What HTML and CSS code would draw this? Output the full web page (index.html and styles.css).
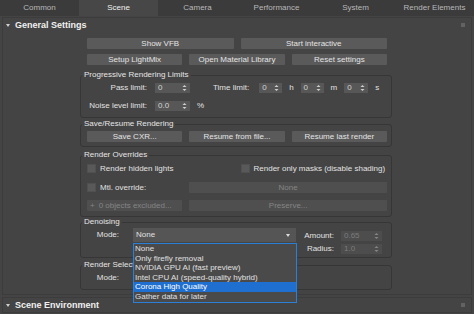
FILE: index.html
```html
<!DOCTYPE html>
<html lang="en">
<head>
    <meta charset="UTF-8">
    <title>Render Setup - Scene</title>
    <link rel="stylesheet" href="styles.css">
</head>
<body>

    <!-- Tab bar -->
    <div class="tabs">
        <div class="tab">Common</div>
        <div class="tab active">Scene</div>
        <div class="tab">Camera</div>
        <div class="tab">Performance</div>
        <div class="tab">System</div>
        <div class="tab">Render Elements</div>
    </div>

    <!-- General Settings rollout -->
    <div class="rollout">
        <div class="rollout-head"><span class="arrow"></span>General Settings<span class="pin"></span></div>
        <div class="rollout-body">

            <div class="btn-row two">
                <button class="btn">Show VFB</button>
                <button class="btn">Start interactive</button>
            </div>
            <div class="btn-row three">
                <button class="btn">Setup LightMix</button>
                <button class="btn">Open Material Library</button>
                <button class="btn">Reset settings</button>
            </div>

            <fieldset class="group g-limits">
                <legend>Progressive Rendering Limits</legend>
                <div class="row">
                    <span class="lbl">Pass limit:</span>
                    <span class="spin w35">0<svg viewBox="0 0 5 8"><polygon points="0.5,3 2.5,1 4.5,3"/><polygon points="0.5,5 2.5,7 4.5,5"/></svg></span>
                    <span class="lbl-time">Time limit:</span>
                    <span class="spin w23">0<svg viewBox="0 0 5 8"><polygon points="0.5,3 2.5,1 4.5,3"/><polygon points="0.5,5 2.5,7 4.5,5"/></svg></span>
                    <span class="unit">h</span>
                    <span class="spin w23">0<svg viewBox="0 0 5 8"><polygon points="0.5,3 2.5,1 4.5,3"/><polygon points="0.5,5 2.5,7 4.5,5"/></svg></span>
                    <span class="unit">m</span>
                    <span class="spin w24">0<svg viewBox="0 0 5 8"><polygon points="0.5,3 2.5,1 4.5,3"/><polygon points="0.5,5 2.5,7 4.5,5"/></svg></span>
                    <span class="unit">s</span>
                </div>
                <div class="row">
                    <span class="lbl">Noise level limit:</span>
                    <span class="spin w35">0.0<svg viewBox="0 0 5 8"><polygon points="0.5,3 2.5,1 4.5,3"/><polygon points="0.5,5 2.5,7 4.5,5"/></svg></span>
                    <span class="unit">%</span>
                </div>
            </fieldset>

            <fieldset class="group g-save">
                <legend>Save/Resume Rendering</legend>
                <div class="btn-row three flat">
                    <button class="btn">Save CXR...</button>
                    <button class="btn">Resume from file...</button>
                    <button class="btn">Resume last render</button>
                </div>
            </fieldset>

            <fieldset class="group g-over">
                <legend>Render Overrides</legend>
                <div class="grid2">
                    <label class="check"><span class="box"></span>Render hidden lights</label>
                    <label class="check"><span class="box"></span>Render only masks (disable shading)</label>
                </div>
                <div class="grid3">
                    <label class="check"><span class="box"></span>Mtl. override:</label>
                    <button class="btn off span2">None</button>
                </div>
                <div class="grid3">
                    <button class="btn off left"><span class="plus">+</span>0 objects excluded...</button>
                    <button class="btn off span2">Preserve...</button>
                </div>
            </fieldset>

            <fieldset class="group g-denoise">
                <legend>Denoising</legend>
                <div class="den">
                    <span class="mode-lbl">Mode:</span>
                    <div class="select">
                        None<span class="caret"></span>
                        <!-- opened dropdown list -->
                        <div class="list">
                            <div>None</div>
                            <div>Only firefly removal</div>
                            <div>NVIDIA GPU AI (fast preview)</div>
                            <div>Intel CPU AI (speed-quality hybrid)</div>
                            <div class="sel">Corona High Quality</div>
                            <div>Gather data for later</div>
                        </div>
                    </div>
                    <div class="den-right">
                        <div class="row">
                            <span class="lbl-small">Amount:</span>
                            <span class="spin off w41">0.65<svg viewBox="0 0 5 8"><polygon points="0.5,3 2.5,1 4.5,3"/><polygon points="0.5,5 2.5,7 4.5,5"/></svg></span>
                        </div>
                        <div class="row">
                            <span class="lbl-small">Radius:</span>
                            <span class="spin off w41">1.0<svg viewBox="0 0 5 8"><polygon points="0.5,3 2.5,1 4.5,3"/><polygon points="0.5,5 2.5,7 4.5,5"/></svg></span>
                        </div>
                    </div>
                </div>
            </fieldset>

            <fieldset class="group g-sel">
                <legend>Render Selection</legend>
                <div class="den">
                    <span class="mode-lbl">Mode:</span>
                    <div class="select"></div>
                </div>
            </fieldset>

        </div>
    </div>

    <!-- Scene Environment rollout (collapsed below the fold) -->
    <div class="rollout">
        <div class="rollout-head"><span class="arrow"></span>Scene Environment<span class="pin"></span></div>
    </div>

</body>
</html>
```

FILE: styles.css
```css
* {
    margin: 0;
    padding: 0;
    box-sizing: border-box;
}

body {
    background: #444444;
    color: #e2e2e2;
    font-family: "Liberation Sans", Arial, sans-serif;
    font-size: 8px;
    line-height: 10px;
    width: 474px;
    height: 314px;
    overflow: hidden;
}

/* Tabs */
.tabs {
    display: flex;
    height: 16px;
    background: #3b3b3b;
}

.tab {
    flex: 1;
    text-align: center;
    line-height: 16px;
    color: #b8b8b8;
}

.tab.active {
    background: #474747;
    color: #f0f0f0;
}

/* Rollouts */
.rollout {
    margin: 1px 2px 0;
    border: 1px solid #3c3c3c;
}

.rollout + .rollout {
    margin-top: 2px;
}

.rollout-head {
    display: flex;
    align-items: center;
    height: 14px;
    padding: 0 6px 0 3px;
    font-size: 9px;
    font-weight: bold;
    color: #f0f0f0;
}

.rollout-head .arrow {
    width: 0;
    height: 0;
    border-left: 2.5px solid transparent;
    border-right: 2.5px solid transparent;
    border-top: 3px solid #cfcfcf;
    margin-right: 5px;
}

.rollout-head .pin {
    margin-left: auto;
    width: 4px;
    height: 4px;
    background: #626262;
}

.rollout-body {
    padding: 6px 0 4px 77px;
}

.rollout-body > * {
    width: 312px;
}

/* Buttons */
.btn-row {
    display: grid;
    gap: 7px;
    padding: 0 5px 0 7px;
}

.btn-row.two {
    grid-template-columns: 1fr 1fr;
}

.btn-row.three {
    grid-template-columns: 1fr 1fr 1fr;
    margin-top: 5px;
}

.btn-row.flat {
    width: auto;
    padding: 0;
    margin-top: 0;
}

.btn {
    height: 11px;
    border: none;
    border-radius: 1px;
    background: #5a5a5a;
    color: #e4e4e4;
    font: inherit;
    line-height: 11px;
}

.btn.off {
    background: #4f4f4f;
    color: #858585;
}

.btn.left {
    display: flex;
    align-items: center;
    padding-left: 3px;
}

.btn .plus {
    margin-right: 4px;
}

.span2 {
    grid-column: span 2;
}

/* Group boxes */
.group {
    border: 1px solid #363636;
    border-radius: 3px;
    padding: 3px 4px 6px 6px;
    min-width: 0;
}

.group legend {
    margin-left: -5px;
    padding: 0 2px;
    line-height: 10px;
    color: #e4e4e4;
}

.g-limits { margin-top: 5px; }
.g-save { margin-top: 1px; padding-top: 2px; padding-bottom: 4px; }
.g-over { margin-top: 3px; padding-bottom: 5px; }
.g-denoise { margin-top: 0; padding-top: 1px; padding-bottom: 3px; }
.g-sel { margin-top: 2px; padding-top: 1px; padding-bottom: 4px; }

.row {
    display: flex;
    align-items: center;
    height: 10px;
}

.row + .row {
    margin-top: 8px;
}

.lbl {
    width: 60px;
    margin-right: 8px;
    text-align: right;
    white-space: nowrap;
}

.lbl-time {
    margin: 0 10px 0 23px;
}

.unit {
    margin: 0 7px;
}

/* Spinners */
.spin {
    display: flex;
    align-items: center;
    justify-content: space-between;
    height: 10px;
    padding: 0 3px;
    background: #575757;
    color: #d4d4d4;
}

.spin svg {
    width: 5px;
    height: 8px;
    fill: #cfcfcf;
}

.spin.off {
    background: #4d4d4d;
    color: #7c7c7c;
}

.spin.off svg {
    fill: #858585;
}

.w23 { width: 23px; }
.w24 { width: 24px; }
.w35 { width: 35px; }
.w41 { width: 41px; }

/* Checkbox rows */
.grid2,
.grid3 {
    display: grid;
    gap: 7px;
    height: 11px;
    align-items: center;
}

.grid2 { grid-template-columns: 1fr 1fr; }
.grid3 { grid-template-columns: 1fr 1fr 1fr; margin-top: 7px; }
.grid2 + .grid3 { margin-top: 8px; }

.check {
    display: flex;
    align-items: center;
    white-space: nowrap;
}

.check .box {
    width: 9px;
    height: 9px;
    margin-right: 4px;
    background: #595959;
    border: 1px solid #505050;
}

/* Denoising */
.den {
    display: flex;
    align-items: flex-start;
}

.mode-lbl {
    width: 32px;
    margin-right: 14px;
    text-align: right;
    line-height: 14px;
}

.select {
    position: relative;
    display: flex;
    align-items: center;
    justify-content: space-between;
    width: 163px;
    height: 14px;
    padding: 0 6px 0 3px;
    background: #555555;
    color: #e0e0e0;
}

.caret {
    width: 0;
    height: 0;
    border-left: 2.5px solid transparent;
    border-right: 2.5px solid transparent;
    border-top: 3px solid #dddddd;
}

.den-right {
    margin: 3px 0 0 8px;
}

.den-right .row + .row {
    margin-top: 3px;
}

.lbl-small {
    width: 30px;
    margin-right: 7px;
    text-align: right;
}

/* Open dropdown list */
.list {
    position: absolute;
    top: 15px;
    left: 0;
    width: 164px;
    z-index: 5;
    border: 1px solid #2b7fd6;
    background: #4a4a4a;
}

.list div {
    height: 9.6px;
    line-height: 9.6px;
    padding-left: 1px;
    color: #e0e0e0;
    white-space: nowrap;
}

.list .sel {
    background: #1f6fd0;
    color: #ffffff;
}
```
